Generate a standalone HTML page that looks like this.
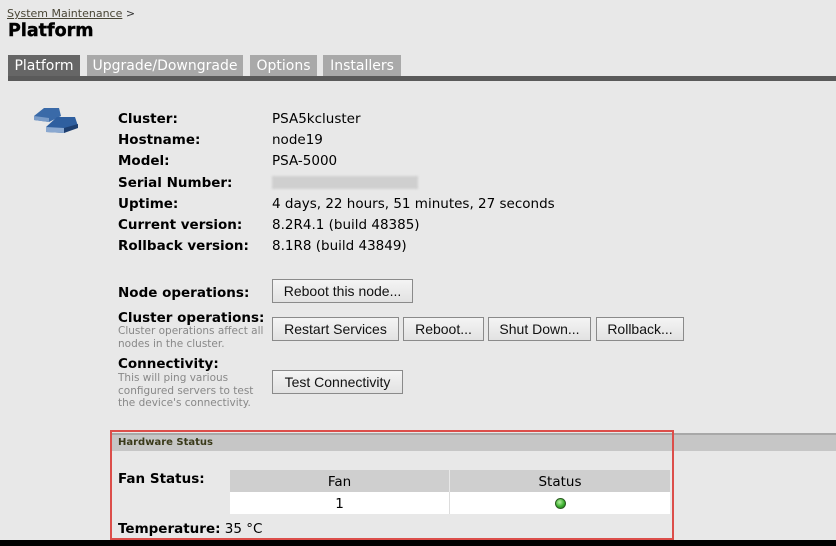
<!DOCTYPE html>
<html><head><meta charset="utf-8"><style>
*{margin:0;padding:0;box-sizing:border-box}
body{width:836px;height:546px;overflow:hidden;background:#e8e8e8;font-family:"DejaVu Sans","Liberation Sans",sans-serif;position:relative;color:#000}
.a{position:absolute;white-space:nowrap}
.tab{position:absolute;top:55px;height:21px;background:#a9a9a9;color:#fff;font-size:14px;line-height:22px;text-align:center}
.l{position:absolute;left:118px;font-weight:bold;font-size:13.5px;line-height:18px}
.v{position:absolute;left:272px;font-size:13.5px;line-height:18px}
.btn{position:absolute;height:24px;border:1px solid #8a8a8a;background:linear-gradient(#f4f4f4,#e2e2e2);font-family:"Liberation Sans",sans-serif;font-size:14px;line-height:22px;text-align:center;color:#111}
.s{position:absolute;left:118px;font-size:10.5px;color:#888;line-height:12.5px}
</style></head><body>
<div class="a" style="left:7px;top:7px;font-size:11px;color:#333"><span style="text-decoration:underline;color:#4a4636">System Maintenance</span> &gt;</div>
<div class="a" style="left:8px;top:21px;font-size:17.5px;font-weight:900;-webkit-text-stroke:0.4px #000">Platform</div>
<div class="tab" style="left:8px;width:72px;background:#666">Platform</div>
<div class="tab" style="left:87px;width:156px">Upgrade/Downgrade</div>
<div class="tab" style="left:250px;width:67px">Options</div>
<div class="tab" style="left:323px;width:78px">Installers</div>
<div class="a" style="left:8px;top:76px;width:828px;height:5px;background:#5a5a5a"></div>
<svg class="a" style="left:32px;top:106px" width="50" height="35" viewBox="0 0 50 35">
<path d="M2 10 L12 2 L27 2 L29 10 L17 16 L2 14Z" fill="#3a6aa8"/><path d="M2 10 L17 12 L17 16 L2 14Z" fill="#7a9cc8"/>
<path d="M14 21 L25 11 L43 11 L46 20 L32 27 L14 26Z" fill="#2f5f9f"/><path d="M14 21 L32 22 L32 27 L14 26Z" fill="#8aa8d0"/><path d="M32 22 L46 18 L46 22 L32 27Z" fill="#1e3f70"/>
</svg>
<div class="l" style="top:110px">Cluster:</div><div class="v" style="top:110px">PSA5kcluster</div>
<div class="l" style="top:131px">Hostname:</div><div class="v" style="top:131px">node19</div>
<div class="l" style="top:152px">Model:</div><div class="v" style="top:152px">PSA-5000</div>
<div class="l" style="top:174px">Serial Number:</div><div class="a" style="left:272px;top:176px;width:146px;height:13px;background:#cfcfcf;filter:blur(1px)"></div>
<div class="l" style="top:195px">Uptime:</div><div class="v" style="top:195px">4 days, 22 hours, 51 minutes, 27 seconds</div>
<div class="l" style="top:216px">Current version:</div><div class="v" style="top:216px">8.2R4.1 (build 48385)</div>
<div class="l" style="top:237px">Rollback version:</div><div class="v" style="top:237px">8.1R8 (build 43849)</div>
<div class="l" style="top:284px">Node operations:</div>
<div class="btn" style="left:272px;top:279px;width:141px">Reboot this node...</div>
<div class="l" style="top:309px">Cluster operations:</div>
<div class="s" style="top:325px">Cluster operations affect all<br>nodes in the cluster.</div>
<div class="btn" style="left:272px;top:317px;width:127px">Restart Services</div>
<div class="btn" style="left:403px;top:317px;width:81px">Reboot...</div>
<div class="btn" style="left:488px;top:317px;width:103px">Shut Down...</div>
<div class="btn" style="left:596px;top:317px;width:88px">Rollback...</div>
<div class="l" style="top:355px">Connectivity:</div>
<div class="s" style="top:372px">This will ping various<br>configured servers to test<br>the device's connectivity.</div>
<div class="btn" style="left:272px;top:370px;width:131px">Test Connectivity</div>
<div class="a" style="left:112px;top:433px;width:724px;height:18px;background:#c6c6c6;border-top:2px solid #a8a8a8;font-size:10px;font-weight:bold;color:#3a3a1a;line-height:16px;padding-left:6px">Hardware Status</div>
<div class="l" style="top:470px">Fan Status:</div>
<div class="a" style="left:230px;top:470px;width:440px;height:22px;background:#cfcfcf;font-size:13.5px;line-height:24px">
<div class="a" style="left:0;width:220px;text-align:center;border-right:1px solid #e8e8e8">Fan</div><div class="a" style="left:220px;width:220px;text-align:center">Status</div></div>
<div class="a" style="left:230px;top:492px;width:440px;height:22px;background:#fff;font-size:13.5px;line-height:24px">
<div class="a" style="left:0;width:220px;height:22px;text-align:center;border-right:1px solid #ddd">1</div></div>
<div class="a" style="left:555px;top:498px;width:11px;height:11px;border-radius:50%;background:radial-gradient(circle at 40% 35%,#b6f0a0,#3cb030 55%,#1c6a18);border:1px solid #2a5a20"></div>
<div class="a" style="left:118px;top:520px;font-size:13.5px;line-height:18px"><b>Temperature:</b> 35 °C</div>
<div class="a" style="left:110px;top:430px;width:564px;height:110px;border:2px solid #dc4e4a"></div>
<div class="a" style="left:0;top:540px;width:836px;height:6px;background:#000"></div>
</body></html>
